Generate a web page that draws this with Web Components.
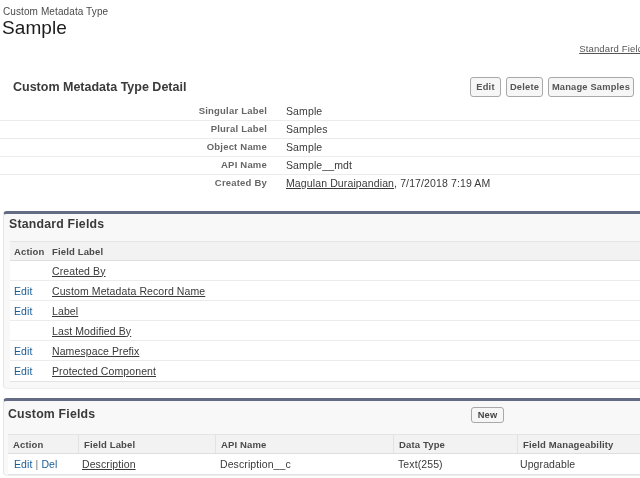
<!DOCTYPE html>
<html>
<head>
<meta charset="utf-8">
<title>Custom Metadata Type</title>
<style>
    html, body { margin: 0; padding: 0; background: #fff; overflow: hidden; }
    body { width: 640px; height: 478px; font-family: "Liberation Sans", Arial, sans-serif; color: #222; filter: blur(.3px); }
</style>
</head>
<body>
<page-header></page-header>
<detail-block title="Custom Metadata Type Detail">
    <detail-row label="Singular Label">Sample</detail-row>
    <detail-row label="Plural Label">Samples</detail-row>
    <detail-row label="Object Name">Sample</detail-row>
    <detail-row label="API Name">Sample__mdt</detail-row>
    <detail-row label="Created By" last><u>Magulan Duraipandian</u>, 7/17/2018 7:19 AM</detail-row>
</detail-block>
<fields-panel id="standard" heading="Standard Fields" style="--panel-top:19px;--table-left:6px;--title-left:5px;--title-h:27px;--title-bottom:7px;--panel-bottom:6px"></fields-panel>
<fields-panel id="custom" heading="Custom Fields" action="New" style="--panel-top:9px;--table-left:4px;--title-left:4px;--title-h:33px;--title-bottom:7px;--panel-bottom:0"></fields-panel>

<script>
class PageHeader extends HTMLElement {
    constructor() {
        super();
        this.attachShadow({ mode: 'open' }).innerHTML = `
            <style>
                :host { display: block; height: 75px; padding-top: 6px; box-sizing: border-box; }
                .type { font-size: 10px; line-height: 11px; color: #4a4a4a; padding-left: 3px; letter-spacing: .1px; }
                h1 { margin: 0; font-weight: normal; font-size: 19px; line-height: 21px; color: #1c1c1c; padding-left: 2px; letter-spacing: .1px; }
                .links { display: flex; justify-content: flex-end; margin-top: 5px; overflow: hidden; }
                a { font-size: 9.5px; line-height: 12px; color: #555; text-decoration: underline; white-space: nowrap; margin-right: -8px; letter-spacing: .15px; }
            </style>
            <div class="type">Custom Metadata Type</div>
            <h1>Sample</h1>
            <div class="links"><a>Standard Fields</a></div>
        `;
    }
}

class SfButton extends HTMLElement {
    constructor() {
        super();
        this.attachShadow({ mode: 'open' }).innerHTML = `
            <style>
                :host { display: inline-flex; align-items: center; justify-content: center; height: 20px; box-sizing: border-box;
                    border: 1px solid #a8a8a8; border-radius: 3px; background: #f6f6f6;
                    font-size: 9.3px; font-weight: bold; color: #555; letter-spacing: .2px; white-space: nowrap; }
            </style>
            <slot></slot>
        `;
    }
}

class DetailBlock extends HTMLElement {
    constructor() {
        super();
        this.attachShadow({ mode: 'open' }).innerHTML = `
            <style>
                :host { display: block; }
                .top { display: flex; align-items: center; height: 28px; box-sizing: border-box; padding: 0 6px 4px 13px; gap: 5px; }
                h2 { margin: 0; flex-grow: 1; font-size: 12.5px; font-weight: bold; color: #3a3a3a; }
            </style>
            <div class="top">
                <h2></h2>
                <sf-button style="width:31px">Edit</sf-button>
                <sf-button style="width:37px">Delete</sf-button>
                <sf-button style="width:86px">Manage Samples</sf-button>
            </div>
            <slot></slot>
        `;
        this.shadowRoot.querySelector('h2').textContent = this.getAttribute('title');
    }
}

class DetailRow extends HTMLElement {
    constructor() {
        super();
        this.attachShadow({ mode: 'open' }).innerHTML = `
            <style>
                :host { display: grid; grid-template-columns: 267px 1fr; column-gap: 19px; align-items: center; height: 18px; box-sizing: border-box;
                    border-bottom: 1px solid #ececec; padding-bottom: 2px; }
                :host([last]) { border-bottom: 0; height: 17px; }
                .label { text-align: right; font-size: 9.5px; font-weight: bold; color: #666; letter-spacing: .2px; }
                .value { font-size: 10.5px; color: #3a3a3a; letter-spacing: .12px; }
            </style>
            <div class="label"></div>
            <div class="value"><slot></slot></div>
        `;
        this.shadowRoot.querySelector('.label').textContent = this.getAttribute('label');
    }
}

const PANEL_DATA = {
    standard: {
        columns: '38px 1fr',
        head: ['Action', 'Field Label'],
        rows: [
            ['', 'Created By'],
            ['Edit', 'Custom Metadata Record Name'],
            ['Edit', 'Label'],
            ['', 'Last Modified By'],
            ['Edit', 'Namespace Prefix'],
            ['Edit', 'Protected Component']
        ]
    },
    custom: {
        columns: '70px 137px 178px 124px 1fr',
        head: ['Action', 'Field Label', 'API Name', 'Data Type', 'Field Manageability'],
        rows: [
            ['Edit | Del', 'Description', 'Description__c', 'Text(255)', 'Upgradable']
        ]
    }
};

class FieldsPanel extends HTMLElement {
    constructor() {
        super();
        this.attachShadow({ mode: 'open' }).innerHTML = `
            <style>
                :host { display: block; margin: var(--panel-top) 0 0 3px; width: 660px; box-sizing: border-box;
                    background: #f8f8f8; border-top: 3px solid #636c84; border-left: 1px solid #e6e6e6; border-bottom: 1px solid #eee;
                    border-radius: 4px 0 0 4px; padding-bottom: var(--panel-bottom); }
                .title { display: flex; align-items: center; height: var(--title-h); box-sizing: border-box; padding: 0 0 var(--title-bottom) var(--title-left); position: relative; }
                h3 { margin: 0; font-size: 12.3px; font-weight: bold; color: #3a3a3a; letter-spacing: .2px; }
                sf-button { position: absolute; left: 467px; top: 6px; height: 16px; width: 33px; color: #444; }
                .table { margin-left: var(--table-left); border-bottom: 1px solid #e2e2e2; background: #fff; }
                .row { display: grid; grid-template-columns: var(--cols); height: 20px; align-items: center; box-sizing: border-box; border-bottom: 1px solid #ececec; }
                .row:last-child { border-bottom: 0; }
                .row.head { background: #f2f2f2; border-top: 1px solid #e4e4e4; border-bottom: 1px solid #dedede; font-size: 9.5px; font-weight: bold; color: #4a4a4a; }
                .row > div { white-space: nowrap; box-sizing: border-box; padding-left: 4px; }
                .row.head > div { height: 100%; display: flex; align-items: center; letter-spacing: .15px; }
                .row.ruled > div:nth-child(1) { padding-left: 6px; }
                .row.head.ruled > div { padding-left: 5px; }
                .row.head.ruled > div + div { border-left: 1px solid #e2e2e2; }
                .row.body.ruled > div:nth-child(3), .row.body.ruled > div:nth-child(4) { padding-left: 5px; }
                .row.body.ruled > div:nth-child(5) { padding-left: 3px; }
                .row.body { font-size: 10.5px; color: #3a3a3a; letter-spacing: .1px; }
                .row.body a { color: #1a5e96; }
            </style>
            <div class="title"><h3></h3></div>
            <div class="table"></div>
        `;
        const root = this.shadowRoot;
        const data = PANEL_DATA[this.id];
        const ruled = data.head.length > 2 ? ' ruled' : '';
        root.querySelector('h3').textContent = this.getAttribute('heading');
        if (this.hasAttribute('action')) {
            const btn = document.createElement('sf-button');
            btn.textContent = this.getAttribute('action');
            root.querySelector('.title').append(btn);
        }
        const table = root.querySelector('.table');
        table.style.setProperty('--cols', data.columns);

        const head = document.createElement('div');
        head.className = 'row head' + ruled;
        head.innerHTML = data.head.map(h => `<div>${h}</div>`).join('');
        table.append(head);

        data.rows.forEach(cells => {
            const row = document.createElement('div');
            row.className = 'row body' + ruled;
            row.innerHTML = cells.map((c, i) => {
                if (i === 0) return `<div>${c.split(' | ').map(a => `<a>${a}</a>`).join(' <span style="color:#777">|</span> ')}</div>`;
                if (i === 1) return `<div><u>${c}</u></div>`;
                return `<div>${c}</div>`;
            }).join('');
            table.append(row);
        });
    }
}

customElements.define('page-header', PageHeader);
customElements.define('sf-button', SfButton);
customElements.define('detail-block', DetailBlock);
customElements.define('detail-row', DetailRow);
customElements.define('fields-panel', FieldsPanel);
</script>
</body>
</html>
